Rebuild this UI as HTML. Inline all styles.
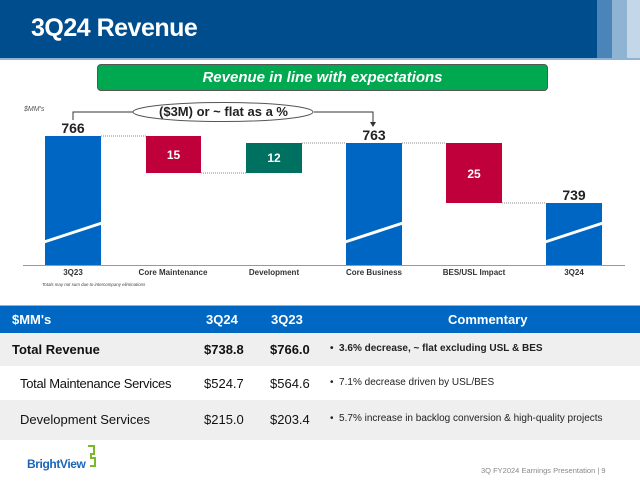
<!DOCTYPE html>
<html><head><style>
body{margin:0;width:640px;height:483px;position:relative;overflow:hidden;background:#fff;font-family:"Liberation Sans",Arial,sans-serif}
.a{position:absolute}
.b{font-weight:bold}
</style></head><body>
<div class="a" style="left:0;top:0;width:640px;height:58px;background:#004d8e"></div>
<div class="a" style="left:597px;top:0;width:15px;height:58px;background:#4a84b8"></div>
<div class="a" style="left:612px;top:0;width:15px;height:58px;background:#8fb3d3"></div>
<div class="a" style="left:627px;top:0;width:13px;height:58px;background:#c4d7e8"></div>
<div class="a" style="left:0;top:58px;width:640px;height:2px;background:#8fb3d3"></div>
<div class="a b" style="left:31px;top:14px;font-size:25px;color:#fff;letter-spacing:-0.5px">3Q24 Revenue</div>
<div class="a b" style="left:97px;top:64px;width:449px;height:25px;background:#00a84f;border:1px solid #555;border-radius:4px;color:#fff;font-style:italic;font-size:15px;text-align:center;line-height:25px">Revenue in line with expectations</div>
<div class="a" style="left:24px;top:106px;font-size:7px;font-style:italic;color:#555">$MM's</div>
<svg class="a" style="left:0;top:0" width="640" height="300">
<path d="M73 120V112H133M314 112H373V122" stroke="#333" fill="none" stroke-width="1"/>
<path d="M370 122L376 122L373 127Z" fill="#333"/>
<ellipse cx="223" cy="112" rx="90" ry="9.5" fill="#fff" stroke="#555"/>
<g stroke="#666" stroke-dasharray="1,1" stroke-width="0.8">
<path d="M101 136H146M201 173H246M302 143H346M402 143H446M502 203H546"/></g>
<rect x="45" y="136" width="56" height="129" fill="#0066c4"/>
<rect x="146" y="136" width="55" height="37" fill="#c0003a"/>
<rect x="246" y="143" width="56" height="30" fill="#007061"/>
<rect x="346" y="143" width="56" height="122" fill="#0066c4"/>
<rect x="446" y="143" width="56" height="60" fill="#c0003a"/>
<rect x="546" y="203" width="56" height="62" fill="#0066c4"/>
<g stroke="#fff" stroke-width="3"><path d="M41 243L105 222M342 243L406 222M542 243L606 222"/></g>
<path d="M23 265.5H625" stroke="#999" stroke-width="1"/>
</svg>
<div class="a b" style="left:45px;top:120px;width:56px;text-align:center;font-size:14px;color:#222">766</div>
<div class="a b" style="left:346px;top:127px;width:56px;text-align:center;font-size:14px;color:#222">763</div>
<div class="a b" style="left:546px;top:187px;width:56px;text-align:center;font-size:14px;color:#222">739</div>
<div class="a b" style="left:146px;top:148px;width:55px;text-align:center;font-size:12px;color:#fff">15</div>
<div class="a b" style="left:246px;top:151px;width:56px;text-align:center;font-size:12px;color:#fff">12</div>
<div class="a b" style="left:446px;top:167px;width:56px;text-align:center;font-size:12px;color:#fff">25</div>
<div class="a b" style="left:133px;top:104px;width:181px;text-align:center;font-size:13px;color:#222">($3M) or ~ flat as a %</div>
<div class="a b" style="top:268px;left:0;width:640px;font-size:8px;color:#333">
<span class="a" style="left:23px;width:100px;text-align:center">3Q23</span>
<span class="a" style="left:123px;width:100px;text-align:center">Core Maintenance</span>
<span class="a" style="left:224px;width:100px;text-align:center">Development</span>
<span class="a" style="left:324px;width:100px;text-align:center">Core Business</span>
<span class="a" style="left:424px;width:100px;text-align:center">BES/USL Impact</span>
<span class="a" style="left:524px;width:100px;text-align:center">3Q24</span></div>
<div class="a" style="left:42px;top:282px;font-size:4.4px;font-style:italic;color:#444">Totals may not sum due to intercompany eliminations</div>
<div class="a" style="left:0;top:305px;width:640px;height:1px;background:#8fb3d3"></div>
<div class="a" style="left:0;top:306px;width:640px;height:27px;background:#0068c2"></div>
<div class="a" style="left:0;top:333px;width:640px;height:33px;background:#efefef"></div>
<div class="a" style="left:0;top:400px;width:640px;height:40px;background:#efefef"></div>
<div class="a b" style="left:12px;top:312px;font-size:13px;color:#fff">$MM's</div>
<div class="a b" style="left:206px;top:312px;font-size:13px;color:#fff">3Q24</div>
<div class="a b" style="left:271px;top:312px;font-size:13px;color:#fff">3Q23</div>
<div class="a b" style="left:448px;top:312px;font-size:13px;color:#fff">Commentary</div>
<div class="a b" style="left:12px;top:342px;font-size:13px;color:#111">Total Revenue</div>
<div class="a b" style="left:204px;top:342px;font-size:13px;color:#111">$738.8</div>
<div class="a b" style="left:270px;top:342px;font-size:13px;color:#111">$766.0</div>
<div class="a b" style="left:330px;top:343px;font-size:10px;color:#222">•&nbsp; 3.6% decrease, ~ flat excluding USL &amp; BES</div>
<div class="a" style="left:20px;top:376px;font-size:13px;color:#111;letter-spacing:-0.3px">Total Maintenance Services</div>
<div class="a" style="left:204px;top:376px;font-size:13px;color:#111">$524.7</div>
<div class="a" style="left:270px;top:376px;font-size:13px;color:#111">$564.6</div>
<div class="a" style="left:330px;top:377px;font-size:10px;color:#222">•&nbsp; 7.1% decrease driven by USL/BES</div>
<div class="a" style="left:20px;top:412px;font-size:13px;color:#111">Development Services</div>
<div class="a" style="left:204px;top:412px;font-size:13px;color:#111">$215.0</div>
<div class="a" style="left:270px;top:412px;font-size:13px;color:#111">$203.4</div>
<div class="a" style="left:330px;top:413px;font-size:10px;color:#222">•&nbsp; 5.7% increase in backlog conversion &amp; high-quality projects</div>
<div class="a b" style="left:27px;top:457px;font-size:12px;color:#1a66b8;letter-spacing:-0.4px">BrightView</div>
<svg class="a" style="left:86px;top:444px" width="16" height="28"><path d="M2 2H8V10H5V14H9V22H4" stroke="#7ab929" stroke-width="2" fill="none"/></svg>
<div class="a" style="left:481px;top:466px;font-size:7.5px;color:#888">3Q FY2024 Earnings Presentation | 9</div>
</body></html>
